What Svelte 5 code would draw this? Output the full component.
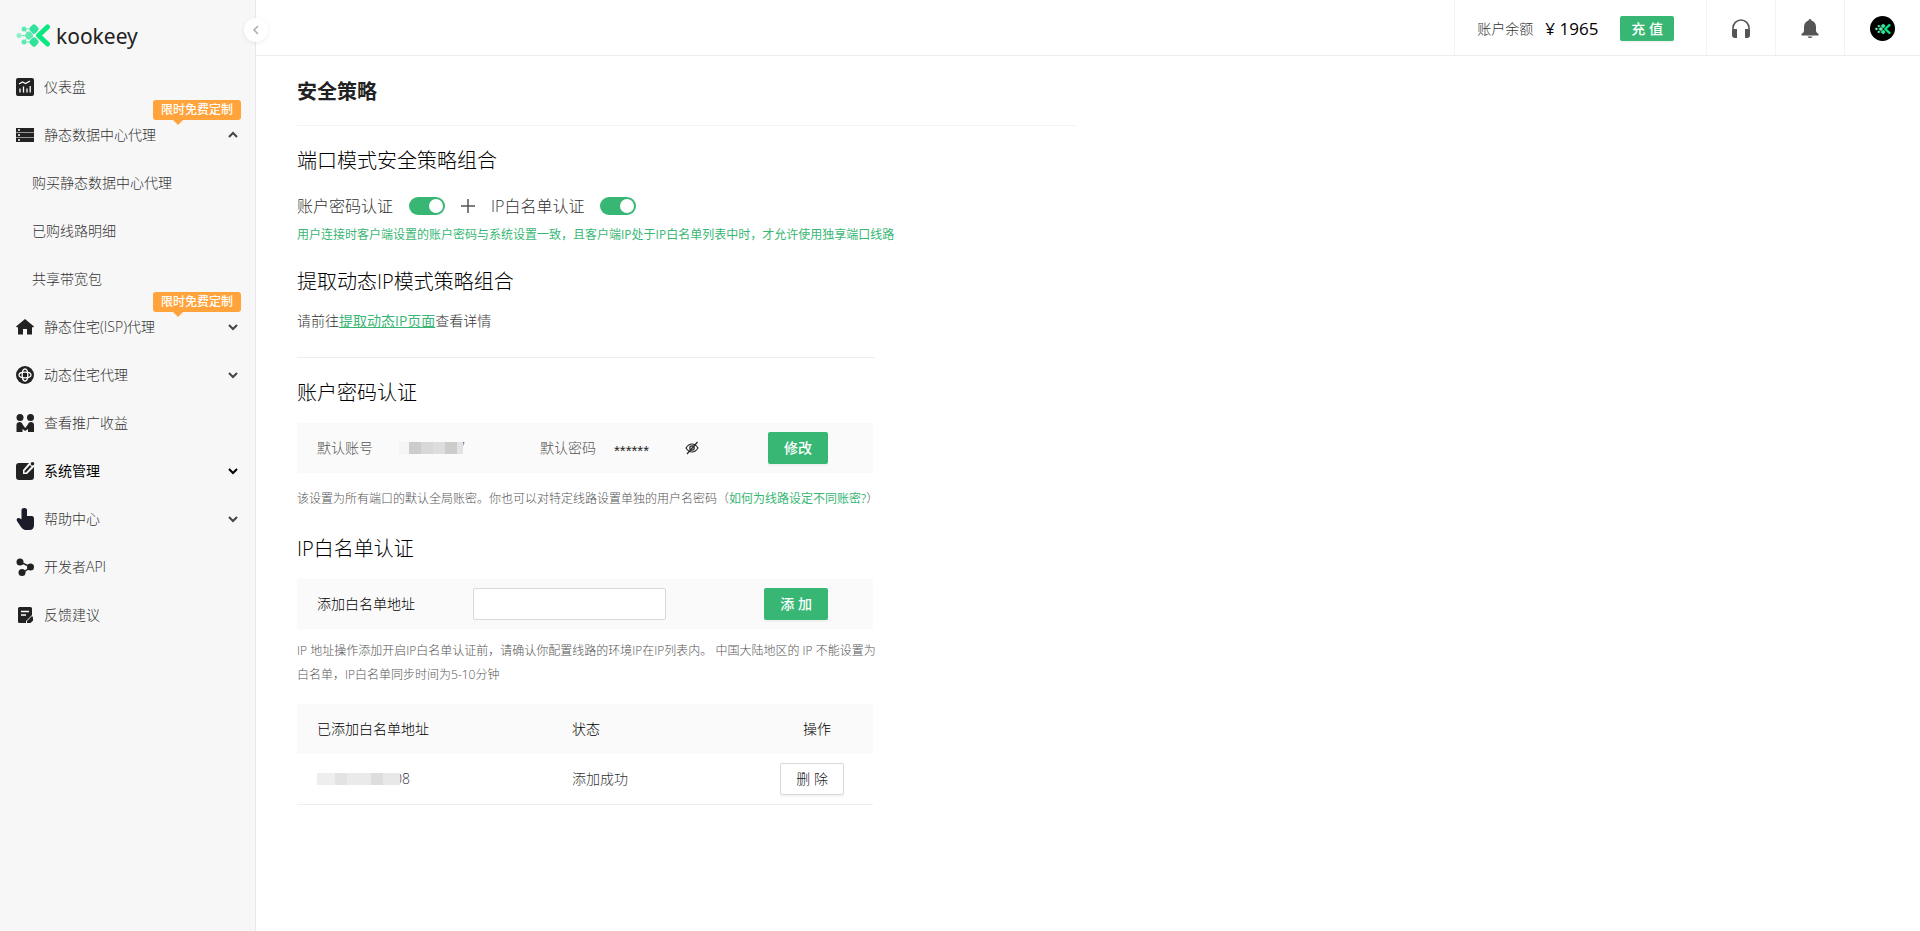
<script lang="ts">
  type NavItem = {
    icon: string;
    label: string;
    badge?: boolean;
    arrow?: 'up' | 'down';
    active?: boolean;
    children?: string[];
  };

  const nav: NavItem[] = [
    { icon: 'dashboard', label: '仪表盘' },
    {
      icon: 'server',
      label: '静态数据中心代理',
      badge: true,
      arrow: 'up',
      children: ['购买静态数据中心代理', '已购线路明细', '共享带宽包'],
    },
    { icon: 'home', label: '静态住宅(ISP)代理', badge: true, arrow: 'down' },
    { icon: 'globe', label: '动态住宅代理', arrow: 'down' },
    { icon: 'people', label: '查看推广收益' },
    { icon: 'edit', label: '系统管理', arrow: 'down', active: true },
    { icon: 'hand', label: '帮助中心', arrow: 'down' },
    { icon: 'nodes', label: '开发者API' },
    { icon: 'note', label: '反馈建议' },
  ];

  let passwordAuth = $state(true);
  let whitelistAuth = $state(true);
  let address = $state('');
</script>

{#snippet mark()}
  <path d="M3 12.500H13M8 6H18M8 19H18M8 6l5 6.500L8 19" stroke="#6eedb9" stroke-width="1" fill="none" />
  <g fill="#2fe39a">
    <rect x="14" y="2" width="8" height="8" rx="2.500" transform="rotate(45 18 6)" />
    <rect x="14" y="15" width="8" height="8" rx="2.500" transform="rotate(45 18 19)" />
  </g>
  <g fill="#5ceab0">
    <rect x="9.500" y="9" width="7" height="7" rx="2" transform="rotate(45 13 12.500)" />
    <circle cx="8" cy="6" r="2.500" />
    <circle cx="8" cy="19" r="2.500" />
  </g>
  <circle cx="3" cy="12.500" r="2.500" fill="#8df1c8" />
  <path d="M31.500 4L22.500 12.500L31.500 21" fill="none" stroke="#0be881" stroke-width="5" stroke-linejoin="round" stroke-linecap="round" />
{/snippet}

{#snippet navIcon(name: string)}
  <svg class="navIcon" viewBox="0 0 18 18" aria-hidden="true">
    {#if name === 'dashboard'}
      <rect width="18" height="18" rx="2" />
      <path class="cut" d="M4 14.500v-4M7.500 14.500V8.500M11 14.500v-4M14.200 14.500V8" />
      <path class="cut" d="M3 6l3.500-2 3 1.500L14 3" />
    {:else if name === 'server'}
      <path d="M0 2h18v4H0zM0 7h18v4H0zM0 12h18v4H0z" />
      <path d="M0 6.500h18M0 11.500h18" stroke="#999" />
      <path d="M2 4h2M2 9h2M2 14h2" stroke="#fff" stroke-width="1.500" />
    {:else if name === 'home'}
      <path d="M9 1L18 8.500 17 9.600 16 9v7.500h-5V11H7v5.500H2V9L1 9.600 0 8.500z" />
    {:else if name === 'globe'}
      <circle cx="9" cy="9" r="9" />
      <ellipse class="cut" cx="9" cy="9" rx="2.800" ry="6" />
      <ellipse class="cut" cx="9" cy="9" rx="6" ry="2.800" />
    {:else if name === 'people'}
      <circle cx="4" cy="3.500" r="3.500" /><circle cx="14.500" cy="3.500" r="3.500" />
      <path d="M.500 18V11q0-3 3.500-3 2 0 3 3l2.200 3 2.300-3q1-3 3-3 3.500 0 3.500 3v7H12v-3l-2.800 2L6.500 15v3z" />
    {:else if name === 'edit'}
      <path d="M3 1h10L7 8v4h4l7-7v10q0 3-3 3H3q-3 0-3-3V4q0-3 3-3z" />
      <path d="M8.500 10.500V9L14 3l1.500 1.500L10 10.500z" />
      <circle cx="16.500" cy="1.800" r="1.800" />
    {:else if name === 'hand'}
      <path class="ink" d="M5.500 0Q5.500-2 8.300-2T11 0v6h4.500q2.500 0 2.500 2.500V15q0 5-4.500 5H9Q7 20 5 17L1 11Q0 8.500 2 8t3.500 1.500z" />
    {:else if name === 'nodes'}
      <path d="M4 4l11 5-9 6" fill="none" stroke="#222" stroke-width="1.500" />
      <circle cx="4" cy="4" r="3.500" /><circle cx="14.500" cy="9" r="3.500" /><circle cx="6" cy="14.500" r="3.500" />
    {:else}
      <path d="M3.500 1h11Q16 1 16 2.500V9l-6 6v2H3.500Q2 17 2 15.500v-13Q2 1 3.500 1z" />
      <path d="M11 17v-2l5-5 1 1.200v3.300L14.500 17z" />
      <path class="cut" d="M5 5.500h8M5 9h5" />
    {/if}
  </svg>
{/snippet}

<div class="layout">
  <aside class="sidebar">
    <div class="brand">
      <svg class="brandMark" viewBox="0 0 35 25" aria-hidden="true">{@render mark()}</svg>
      <span class="brandName">kookeey</span>
    </div>
    <button class="collapse" type="button" aria-label="收起菜单">
      <svg viewBox="0 0 10 10" aria-hidden="true"><path d="M7 1L3 5l4 4" /></svg>
    </button>

    <nav>
      {#each nav as item}
        <a class="navItem" class:active={item.active} href="#{item.icon}">
          {@render navIcon(item.icon)}
          <span class="navLabel">{item.label}</span>
          {#if item.badge}
            <span class="badge">限时免费定制</span>
          {/if}
          {#if item.arrow}
            <svg class="arrow" class:up={item.arrow === 'up'} viewBox="0 0 10 10" aria-hidden="true">
              <path d="M1 3l4 4 4-4" />
            </svg>
          {/if}
        </a>
        {#each item.children ?? [] as child}
          <a class="navItem sub" href="#{item.icon}">{child}</a>
        {/each}
      {/each}
    </nav>
  </aside>

  <div class="page">
    <header class="topbar">
      <div class="balance">
        <span>账户余额</span>
        <span class="amount">¥ 1965</span>
        <button class="button small" type="button">充 值</button>
      </div>
      <button class="tool" type="button" aria-label="客服">
        <svg viewBox="0 0 18 19" aria-hidden="true">
          <path d="M1 14V9a8 8 0 0 1 16 0v5" fill="none" stroke="#555" stroke-width="1.600" />
          <path d="M0 12q0-2 2-2h3v9H3q-3 0-3-3zM18 12q0-2-2-2h-3v9h2q3 0 3-3z" />
        </svg>
      </button>
      <button class="tool" type="button" aria-label="通知">
        <svg viewBox="0 0 18 19" aria-hidden="true">
          <path d="M9 0q1.500 0 1.500 1.500Q15 3 15 8v4q0 1.500 2.500 3 .500 1.500-.500 1.500H1Q0 16.500.500 15 3 13.500 3 12V8q0-5 4.500-6.500Q7.500 0 9 0zM6.500 17.500h5Q11 19 9 19t-2.500-1.500z" />
        </svg>
      </button>
      <button class="tool account" type="button" aria-label="账户">
        <span class="avatar">
          <svg viewBox="0 0 35 25" aria-hidden="true">{@render mark()}</svg>
        </span>
      </button>
    </header>

    <main class="content">
      <h1>安全策略</h1>

      <h2>端口模式安全策略组合</h2>
      <div class="switches">
        <label for="passwordAuth">账户密码认证</label>
        <input id="passwordAuth" class="switch" type="checkbox" role="switch" bind:checked={passwordAuth} />
        <svg class="plus" viewBox="0 0 14 14" aria-hidden="true"><path d="M7 0v14M0 7h14" /></svg>
        <label for="whitelistAuth">IP白名单认证</label>
        <input id="whitelistAuth" class="switch" type="checkbox" role="switch" bind:checked={whitelistAuth} />
      </div>
      <p class="note green">
        用户连接时客户端设置的账户密码与系统设置一致，且客户端IP处于IP白名单列表中时，才允许使用独享端口线路
      </p>

      <h2>提取动态IP模式策略组合</h2>
      <p class="hint">请前往<a href="#dynamic">提取动态IP页面</a>查看详情</p>

      <section class="block">
        <h2>账户密码认证</h2>
        <div class="card credentials">
          <span>默认账号</span>
          <span class="masked"><i class="mosaic account"></i><span class="tail">7</span></span>
          <span>默认密码</span>
          <span class="secret">******</span>
          <button class="eye" type="button" aria-label="显示密码">
            <svg viewBox="0 0 14 14" aria-hidden="true">
              <path d="M1 7q2.500-4 6-4t6 4q-2.500 4-6 4T1 7z" />
              <circle cx="7" cy="7" r="2.200" />
              <path d="M12.500 1L2 13" />
            </svg>
          </button>
          <button class="button" type="button">修改</button>
        </div>
        <p class="note">
          该设置为所有端口的默认全局账密。你也可以对特定线路设置单独的用户名密码（<a href="#lines">如何为线路设定不同账密?</a>）
        </p>

        <h2 class="spaced">IP白名单认证</h2>
        <form class="card addForm" onsubmit={(e) => e.preventDefault()}>
          <label for="address">添加白名单地址</label>
          <input id="address" class="textInput" type="text" autocomplete="off" bind:value={address} />
          <button class="button" type="submit">添 加</button>
        </form>
        <p class="note near">
          IP 地址操作添加开启IP白名单认证前，请确认你配置线路的环境IP在IP列表内。 中国大陆地区的 IP 不能设置为白名单，IP白名单同步时间为5-10分钟
        </p>

        <table>
          <thead>
            <tr><th>已添加白名单地址</th><th>状态</th><th class="action">操作</th></tr>
          </thead>
          <tbody>
            <tr>
              <td><span class="masked"><i class="mosaic address"></i><span class="tail">08</span></span></td>
              <td>添加成功</td>
              <td class="action"><button class="button plain" type="button">删 除</button></td>
            </tr>
          </tbody>
        </table>
      </section>
    </main>
  </div>
</div>

<style>
  :global(body) {
    margin: 0;
    background: #fff;
  }

  .layout {
    display: flex;
    min-height: 100vh;
    font-family: 'Open Sans', 'Noto Sans CJK SC', sans-serif;
    font-size: 14px;
    font-weight: 300;
    line-height: 24px;
    color: #333;
  }

  .layout :global(*) {
    box-sizing: border-box;
  }

  button,
  input {
    font-family: inherit;
  }

  button {
    padding: 0;
    cursor: pointer;
  }

  .sidebar {
    position: relative;
    flex: 0 0 256px;
    background: #f7f7f7;
    border-right: 1px solid #e8e8e8;
  }

  .brand {
    display: flex;
    align-items: center;
    gap: 5px;
    height: 63px;
    padding: 8px 16px 0;
  }

  .brandMark {
    width: 35px;
    height: 25px;
  }

  .brandName {
    font-family: 'Noto Sans', sans-serif;
    font-size: 21px;
    font-weight: 400;
    color: #222;
  }

  .collapse {
    position: absolute;
    top: 18px;
    right: -13px;
    display: grid;
    place-items: center;
    width: 24px;
    height: 24px;
    border: 0;
    border-radius: 50%;
    background: #fff;
    box-shadow: 0 1px 4px rgba(0, 0, 0, 0.08);
  }

  .collapse svg {
    width: 10px;
    height: 10px;
    fill: none;
    stroke: #aaa;
    stroke-width: 1.5;
  }

  .navItem {
    position: relative;
    display: flex;
    align-items: center;
    gap: 10px;
    height: 48px;
    padding: 0 17px 0 16px;
    color: #333;
    text-decoration: none;
  }

  .navItem.sub {
    padding-left: 32px;
  }

  .navItem.active {
    color: #000;
    font-weight: 400;
  }

  .navIcon {
    width: 18px;
    height: 18px;
    fill: #222;
    overflow: visible;
  }

  .cut {
    fill: none;
    stroke: #fff;
    stroke-width: 1.3;
  }

  .ink {
    fill: #1b1b29;
  }

  .arrow {
    width: 10px;
    height: 10px;
    margin-left: auto;
    fill: none;
    stroke: #444;
    stroke-width: 2;
  }

  .active .arrow {
    stroke: #000;
  }

  .arrow.up {
    transform: rotate(180deg);
  }

  .badge {
    position: absolute;
    top: -11px;
    right: 14px;
    padding: 0 8px;
    border-radius: 3px;
    background: #ffa33a;
    color: #fff;
    font-size: 12px;
    font-weight: 500;
    line-height: 20px;
  }

  .badge::after {
    content: '';
    position: absolute;
    top: 20px;
    left: 20px;
    border: 5px solid transparent;
    border-top-color: #ffa33a;
    border-bottom: 0;
  }

  .page {
    flex: 1;
    min-width: 0;
  }

  .topbar {
    display: flex;
    justify-content: flex-end;
    height: 56px;
    border-bottom: 1px solid #eee;
  }

  .balance,
  .tool {
    padding-top: 2px;
    border-left: 1px solid #f3f3f3;
  }

  .balance {
    display: flex;
    align-items: center;
    padding-right: 32px;
    padding-left: 22px;
  }

  .amount {
    margin: 0 22px 0 12px;
    font-size: 17px;
    font-weight: 500;
    color: #000;
  }

  .tool {
    display: grid;
    place-items: center;
    width: 69px;
    border-width: 0 0 0 1px;
    background: transparent;
  }

  .tool svg {
    width: 18px;
    height: 19px;
    fill: #555;
  }

  .tool.account {
    width: 76px;
  }

  .avatar {
    display: grid;
    place-items: center;
    width: 25px;
    height: 25px;
    border-radius: 50%;
    background: #000;
  }

  .avatar svg {
    width: 16px;
    height: 12px;
  }

  .content {
    max-width: 820px;
    padding: 21px 0 40px 41px;
  }

  h1,
  h2,
  p {
    margin: 0;
  }

  h1 {
    padding-bottom: 18px;
    border-bottom: 1px solid #f3f3f3;
    font-size: 20px;
    font-weight: 700;
    line-height: 30px;
    color: #222;
  }

  h2 {
    margin-top: 20px;
    font-size: 20px;
    font-weight: 300;
    line-height: 30px;
    color: #000;
  }

  h2.spaced {
    margin-top: 23px;
  }

  .switches {
    display: flex;
    align-items: center;
    gap: 16px;
    margin-top: 16px;
    font-size: 16px;
    line-height: 28px;
  }

  .switch {
    appearance: none;
    width: 36px;
    height: 18px;
    margin: 0;
    padding: 2px;
    border-radius: 9px;
    background: #ccc;
    cursor: pointer;
  }

  .switch::before {
    content: '';
    display: block;
    width: 14px;
    height: 14px;
    border-radius: 50%;
    background: #fff;
  }

  .switch:checked {
    background: #38b774;
  }

  .switch:checked::before {
    margin-left: auto;
  }

  .plus {
    width: 14px;
    height: 14px;
    stroke: #555;
    stroke-width: 1.5;
  }

  .note {
    margin: 14px -8px 0 0;
    font-size: 12px;
    color: #555;
  }

  .note.near {
    margin-top: 10px;
  }

  .note a {
    color: #38b774;
    font-weight: 400;
    text-decoration: none;
  }

  .note.green {
    margin-top: 3px;
    color: #38b774;
    font-weight: 400;
  }

  .hint {
    margin-top: 12px;
  }

  .hint a {
    color: #38b774;
    font-weight: 400;
  }

  .block {
    width: 578px;
    margin-top: 24px;
    border-top: 1px solid #eee;
  }

  .card {
    display: flex;
    align-items: center;
    width: 576px;
    height: 50px;
    margin-top: 15px;
    padding: 0 45px 0 20px;
    background: #fafafa;
  }

  .credentials {
    color: #555;
  }

  .masked {
    display: flex;
    align-items: center;
  }

  .mosaic {
    z-index: 1;
    height: 12px;
  }

  .mosaic.account {
    width: 64px;
    background: linear-gradient(90deg, #f5f5f5 10px, #ccc 0 22px, #d8d8d8 0 34px, #ddd 0 46px, #ccc 0 58px, #e3e3e3 0);
  }

  .mosaic.address {
    width: 83px;
    background: linear-gradient(90deg, #eee 18px, #e3e3e3 0 30px, #eaeaea 0 54px, #ddd 0 66px, #e8e8e8 0);
  }

  .credentials .masked {
    flex: 1;
    padding-left: 26px;
  }

  .tail {
    margin-left: -6px;
  }

  .secret {
    margin-left: 18px;
    padding-top: 6px;
    font-family: 'Liberation Sans', sans-serif;
    font-size: 15px;
    color: #222;
  }

  .eye {
    width: 14px;
    height: 14px;
    margin: 0 69px 0 36px;
    border: 0;
    background: transparent;
  }

  .eye svg {
    display: block;
    fill: none;
    stroke: #222;
    stroke-width: 1.2;
  }

  .button {
    height: 32px;
    padding: 0 16px;
    border: 0;
    border-radius: 2px;
    background: #38b774;
    box-shadow: 0 2px 0 rgba(0, 0, 0, 0.04);
    color: #fff;
    font-size: 14px;
    font-weight: 500;
    line-height: 24px;
  }

  .button.small {
    height: 25px;
    padding: 0 11px;
  }

  .button.plain {
    padding: 0 15px;
    border: 1px solid #d9d9d9;
    background: #fff;
    color: #222;
    font-weight: 300;
  }

  .addForm label {
    width: 156px;
    color: #000;
  }

  .addForm .button {
    margin-left: auto;
  }

  .textInput {
    width: 193px;
    height: 32px;
    padding: 0 10px;
    border: 1px solid #d9d9d9;
    border-radius: 2px;
    font-size: 14px;
  }

  table {
    width: 576px;
    margin-top: 17px;
    border-collapse: collapse;
    table-layout: fixed;
  }

  th,
  td {
    height: 50px;
    padding: 0 0 0 20px;
    text-align: left;
    font-weight: 300;
  }

  th {
    background: #fafafa;
    color: #000;
  }

  tbody tr {
    border-bottom: 1px solid #eee;
  }

  th:nth-child(1) {
    width: 255px;
  }

  .action {
    width: 148px;
    padding: 0 29px 0 0;
    text-align: right;
  }

  th.action {
    padding-right: 42px;
  }
</style>
